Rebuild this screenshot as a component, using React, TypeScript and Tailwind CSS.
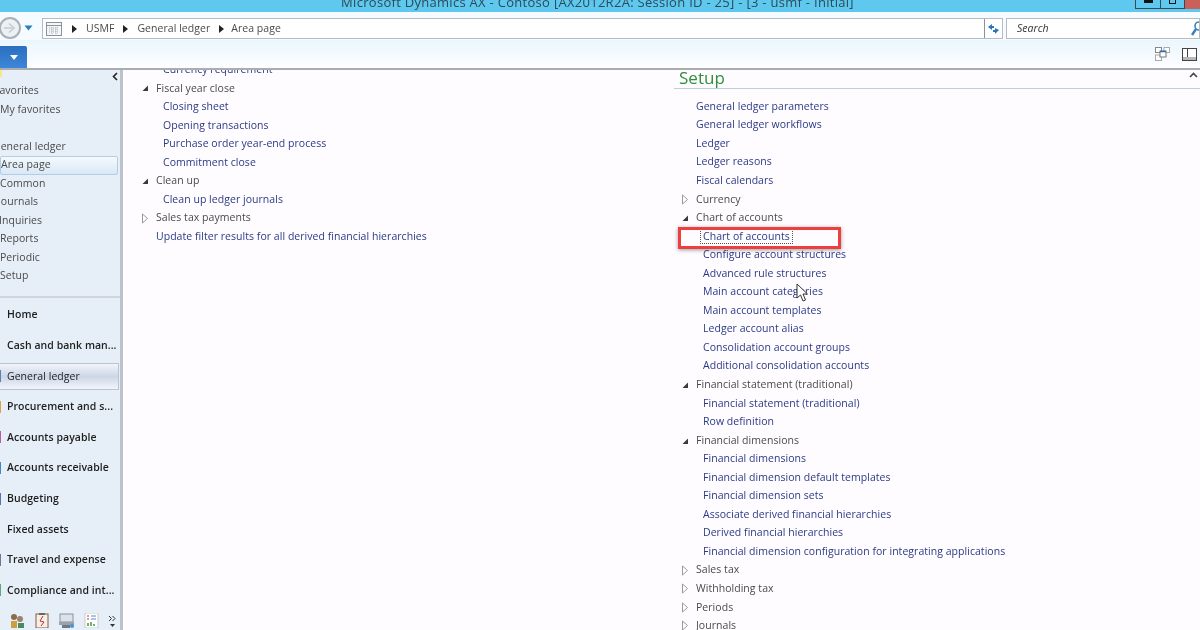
const F = "[font-family:'Open_Sans','Noto_Sans',sans-serif]";

type Row = { t: string; k: "link" | "sub" | "open" | "closed" | "plain" };

const leftRows: Row[] = [
  { t: "Fiscal year close", k: "open" },
  { t: "Closing sheet", k: "sub" },
  { t: "Opening transactions", k: "sub" },
  { t: "Purchase order year-end process", k: "sub" },
  { t: "Commitment close", k: "sub" },
  { t: "Clean up", k: "open" },
  { t: "Clean up ledger journals", k: "sub" },
  { t: "Sales tax payments", k: "closed" },
  { t: "Update filter results for all derived financial hierarchies", k: "link" },
];

const rightRows: Row[] = [
  { t: "General ledger parameters", k: "link" },
  { t: "General ledger workflows", k: "link" },
  { t: "Ledger", k: "link" },
  { t: "Ledger reasons", k: "link" },
  { t: "Fiscal calendars", k: "link" },
  { t: "Currency", k: "closed" },
  { t: "Chart of accounts", k: "open" },
  { t: "Chart of accounts", k: "sub" },
  { t: "Configure account structures", k: "sub" },
  { t: "Advanced rule structures", k: "sub" },
  { t: "Main account categories", k: "sub" },
  { t: "Main account templates", k: "sub" },
  { t: "Ledger account alias", k: "sub" },
  { t: "Consolidation account groups", k: "sub" },
  { t: "Additional consolidation accounts", k: "sub" },
  { t: "Financial statement (traditional)", k: "open" },
  { t: "Financial statement (traditional)", k: "sub" },
  { t: "Row definition", k: "sub" },
  { t: "Financial dimensions", k: "open" },
  { t: "Financial dimensions", k: "sub" },
  { t: "Financial dimension default templates", k: "sub" },
  { t: "Financial dimension sets", k: "sub" },
  { t: "Associate derived financial hierarchies", k: "sub" },
  { t: "Derived financial hierarchies", k: "sub" },
  { t: "Financial dimension configuration for integrating applications", k: "sub" },
  { t: "Sales tax", k: "closed" },
  { t: "Withholding tax", k: "closed" },
  { t: "Periods", k: "closed" },
  { t: "Journals", k: "closed" },
];

const smallNav = ["Favorites", "My favorites", "", "General ledger", "Area page", "Common", "Journals", "Inquiries", "Reports", "Periodic", "Setup"];
const bigNav = [
  { t: "Home", c: "" },
  { t: "Cash and bank man...", c: "" },
  { t: "General ledger", c: "#5a7fb0" },
  { t: "Procurement and s...", c: "#d9a441" },
  { t: "Accounts payable", c: "#c05aa0" },
  { t: "Accounts receivable", c: "#3f87c9" },
  { t: "Budgeting", c: "#5a6fb0" },
  { t: "Fixed assets", c: "" },
  { t: "Travel and expense", c: "#6a7890" },
  { t: "Compliance and int...", c: "#5fa87a" },
];

function Tri({ open }: { open: boolean }) {
  return open ? (
    <svg width="8" height="8" viewBox="0 0 8 8" className="shrink-0">
      <path d="M7 1.500V7H1.500z" fill="#3a3a3a" />
    </svg>
  ) : (
    <svg width="8" height="11" viewBox="0 0 8 11" className="shrink-0">
      <path d="M1.500 1l5 4.500-5 4.500z" fill="#fff" stroke="#9a9a9a" />
    </svg>
  );
}

function Crumb({ cls }: { cls: string }) {
  return (
    <svg width="5" height="8" viewBox="0 0 5 8" className={`shrink-0 ${cls}`}>
      <path d="M0 0l5 4-5 4z" fill="#222" />
    </svg>
  );
}

function TreeRow({ r, focus }: { r: Row; focus?: boolean }) {
  const color = r.k === "open" || r.k === "closed" ? "text-[#4a4a4a]" : "text-[#2b3a86]";
  return (
    <div className={`flex h-[18.55px] items-center whitespace-nowrap ${color}`}>
      <span className="flex w-[22px] shrink-0 items-center pl-[7px]">
        {r.k === "open" && <Tri open />}
        {r.k === "closed" && <Tri open={false} />}
      </span>
      <span className={r.k === "sub" ? "ml-[7px]" : ""}>
        <span className={focus ? "-mx-[3px] border border-dotted border-[#555] px-[2px]" : ""}>{r.t}</span>
      </span>
    </div>
  );
}

export default function App() {
  return (
    <div className={`flex h-[630px] w-[1200px] flex-col overflow-hidden bg-[#fefcff] text-[10.5px] tracking-[0.04px] blur-[0.35px] ${F}`}>
      {/* title bar */}
      <div className="relative flex h-[12px] shrink-0 items-end justify-center overflow-hidden bg-[#5fc8ee] pr-[5px] text-[13px] leading-[19px] tracking-[0.29px] text-[#2c4a5a]">
        <span className="whitespace-nowrap">Microsoft Dynamics AX - Contoso [AX2012R2A: Session ID - 25] - [3 - usmf - Initial]</span>
        <div className="absolute right-0 top-0 flex h-[9px] items-stretch">
          <div className="flex w-[26px] items-start justify-center border border-t-0 border-[#3a4a55] bg-[#5fc8ee]"><div className="h-[3px] w-[9px] bg-[#111]" /></div>
          <div className="flex w-[24px] items-start justify-center border border-l-0 border-t-0 border-[#3a4a55] bg-[#5fc8ee]"><div className="h-[4px] w-[7px] border border-t-0 border-[#111]" /></div>
          <div className="w-[15px] bg-[#c9605a]" />
        </div>
      </div>

      {/* address row */}
      <div className="flex h-[28px] shrink-0 items-start bg-[#f5fbfe] pt-[6px]">
        <div className="-mt-[1px] flex w-[42px] shrink-0 items-center">
          <div className="-ml-[1px] flex h-[22px] w-[22px] items-center justify-center rounded-full border-2 border-[#a8b0b8] bg-[#eef1f4]">
            <svg width="14" height="12" viewBox="0 0 14 12"><path d="M1 6h8M6 1.500L11 6l-5 4.500" fill="none" stroke="#c4cbd1" strokeWidth="1.600" /></svg>
          </div>
          <svg width="9" height="6" viewBox="0 0 9 6" className="ml-[3px]"><path d="M0.500 0.500h8L4.500 5.500z" fill="#2a7fc0" /></svg>
        </div>
        <div className="flex h-[21px] w-[961px] items-center border border-[#b4bcc4] bg-white text-[#4a4a4a]">
          <svg width="16" height="14" viewBox="0 0 16 14" className="ml-[3px] shrink-0"><rect x=".5" y=".5" width="15" height="13" fill="#f4f6f8" stroke="#8a929a" /><path d="M1 3.500h14" stroke="#8a929a" /><path d="M3 6h10M3 8h10M3 10h10M6 5v7M10 5v7" stroke="#a6aeb6" strokeDasharray="1 1" /></svg>
          <Crumb cls="ml-[10px] mr-[9px]" />
          <span>USMF</span>
          <Crumb cls="ml-[9px] mr-[9px]" />
          <span>General ledger</span>
          <Crumb cls="ml-[9px] mr-[7px]" />
          <span>Area page</span>
          <div className="ml-auto flex h-full w-[18px] items-center justify-center border-l border-[#8a929a]">
            <svg width="13" height="12" viewBox="0 0 13 12"><path d="M5 1L1 4l4 3V5h2V3H5zM8 11l4-4-4-2v2H6v2h2z" fill="#2a75c0" /></svg>
          </div>
        </div>
        <div className="ml-[3px] flex h-[21px] min-w-0 flex-1 items-center overflow-hidden border border-[#b4bcc4] bg-white pl-[10px] italic text-[#333]">
          <span>Search</span>
          <svg width="8" height="16" viewBox="0 0 8 16" className="ml-auto shrink-0"><circle cx="8" cy="5" r="4" fill="none" stroke="#3a80c0" strokeWidth="1.600" /><path d="M5 8l-4 6" stroke="#3a80c0" strokeWidth="2.400" /></svg>
        </div>
      </div>

      {/* tab row */}
      <div className="flex h-[28px] shrink-0 items-end justify-between bg-gradient-to-b from-[#eaf6fd] to-[#fdfeff] pt-[6px]">
        <div className="flex h-[22px] w-[27px] items-center justify-center rounded-tr-[2px] bg-gradient-to-b from-[#2a6fc0] to-[#3f86d8]">
          <svg width="8" height="5" viewBox="0 0 8 5"><path d="M0 0h8L4 5z" fill="#fff" /></svg>
        </div>
        <div className="mb-[7px] mr-[3px] flex items-center gap-[12px]">
          <svg width="15" height="14" viewBox="0 0 15 14"><rect x=".5" y=".5" width="6" height="5" fill="#fff" stroke="#888" /><rect x="9" y=".5" width="5.500" height="5" fill="#fff" stroke="#aaa" /><rect x=".5" y="8" width="6" height="5.500" fill="#fff" stroke="#aaa" /><rect x="5" y="4" width="6" height="6" fill="#fff" stroke="#777" /><path d="M5 4.500h6" stroke="#2a6fd0" strokeWidth="1.500" /></svg>
          <svg width="15" height="13" viewBox="0 0 15 13"><rect x=".5" y=".5" width="14" height="12" fill="#fff" stroke="#444" /><rect x="1" y="9" width="13" height="3" fill="#b8b8b8" /><path d="M5.500 1v8" stroke="#444" /></svg>
        </div>
      </div>
      <div className="h-[2px] shrink-0 bg-[#a9adb1]" />

      {/* body */}
      <div className="relative flex min-h-0 flex-1">
        {/* nav */}
        <div className="relative flex w-[120px] shrink-0 flex-col overflow-hidden bg-[#e6eff7] text-[#4a4a4a]">
          <div className="absolute right-[2px] top-[2px]">
            <svg width="6" height="9" viewBox="0 0 6 9"><path d="M5 1L1.500 4.500 5 8" fill="none" stroke="#222" strokeWidth="1.600" /></svg>
          </div>
          <div className="absolute left-0 top-0 h-[7px] w-[2px] bg-[#f5e88a]" />
          <div className="flex h-[226px] shrink-0 flex-col pt-[12px]">
            {smallNav.map((s, i) => (
              <div
                key={i}
                className={`flex h-[18.5px] shrink-0 items-center whitespace-nowrap ${i === 0 ? "-ml-[6px]" : i === 3 ? "-ml-[7px]" : i === 6 ? "-ml-[2px]" : i === 7 ? "-ml-[1px]" : ""} ${s === "Area page" ? "mr-[2px] rounded-[2px] border border-[#b4cde6] bg-gradient-to-b from-[#f4f9fd] to-[#d9e8f6]" : ""}`}
              >
                {s}
              </div>
            ))}
          </div>
          <div className="h-[2px] shrink-0 bg-[#d0d5da]" />
          <div className="flex flex-col pt-[2px] font-semibold text-[#1e1e1e]">
            {bigNav.map((b) => (
              <div key={b.t} className="relative flex h-[30.6px] shrink-0 items-center whitespace-nowrap">
                {b.t === "General ledger" ? (
                  <div className="mr-[1px] flex h-[27px] flex-1 items-center border-y border-r border-[#b8c4d4] bg-gradient-to-b from-[#f2f5fa] via-[#cdd6e7] to-[#f2f5fa] pl-[7px] font-medium">{b.t}</div>
                ) : (
                  <div className="pl-[7px]">{b.t}</div>
                )}
                {b.c && <span className="absolute left-0 top-[9px] h-[12px] w-[1px]" style={{ backgroundColor: b.c }} />}
              </div>
            ))}
          </div>
          <div className="mt-auto flex h-[19px] items-center gap-[9.500px] pl-[10px]">
            <svg width="15" height="15" viewBox="0 0 15 15"><circle cx="4" cy="4" r="3" fill="#8a6a50" /><circle cx="10" cy="6" r="3" fill="#a08068" /><rect x="1" y="8" width="6" height="7" fill="#c9a040" /><rect x="8" y="10" width="6" height="5" fill="#4a8a60" /></svg>
            <svg width="15" height="15" viewBox="0 0 15 15"><rect x="1" y="1" width="12" height="14" fill="#f4f0e8" stroke="#8a5a40" /><rect x="4" y="0" width="6" height="2" fill="#666" /><path d="M8 3L5 8l4 1-3 4" fill="none" stroke="#c03030" /></svg>
            <svg width="15" height="15" viewBox="0 0 15 15"><rect x="1" y="1" width="13" height="8" fill="#dde2ea" stroke="#8a929a" /><rect x="0" y="9" width="15" height="3" fill="#9aa2ac" /><rect x="3" y="12" width="8" height="3" fill="#6a7a8a" /><circle cx="13" cy="13" r="2" fill="#4a90d0" /></svg>
            <svg width="15" height="15" viewBox="0 0 15 15"><rect x="1" y="0" width="13" height="15" fill="#fff" stroke="#c8ccd0" /><path d="M3 3h2M3 6h2" stroke="#d03030" /><path d="M7 3h5M7 6h5" stroke="#5a8ad0" /><path d="M4 13v-3M7 13V9M10 13v-2" stroke="#50a050" strokeWidth="1.600" /></svg>
            <div className="flex flex-col items-center">
              <svg width="8" height="7" viewBox="0 0 8 7"><path d="M1 1l2.500 2.500L1 6M4.500 1L7 3.500 4.500 6" fill="none" stroke="#333" /></svg>
              <svg width="5" height="3" viewBox="0 0 5 3" className="mt-[2px]"><path d="M0 0h5L2.500 3z" fill="#333" /></svg>
            </div>
          </div>
        </div>
        <div className="w-[3px] shrink-0 bg-[#bcc2c8]" />

        {/* main */}
        <div className="relative flex min-w-0 flex-1">
          <div className="w-[551px] shrink-0 overflow-hidden">
            <div className="-mt-[9.4px] pl-[11px]">
              <TreeRow r={{ t: "Currency requirement", k: "sub" }} />
              {leftRows.map((r, i) => (
                <TreeRow key={i} r={r} />
              ))}
            </div>
          </div>
          <div className="flex min-w-0 flex-1 flex-col">
            <div className="flex h-[18.5px] shrink-0 items-end justify-between border-b border-[#bcd0dc] pr-[2px]">
              <span className="ml-[5px] text-[17px] leading-[20px] text-[#2f8f3c]">Setup</span>
              <span className="self-start pt-[2px]">
                <svg width="9" height="6" viewBox="0 0 9 6"><path d="M1 5l3.500-3.500L8 5" fill="none" stroke="#444" strokeWidth="1.600" /></svg>
              </span>
            </div>
            <div className="pt-[8.9px]">
              {rightRows.map((r, i) => (
                <TreeRow key={i} r={r} focus={i === 7} />
              ))}
            </div>
          </div>

          {/* annotation */}
          <div className="pointer-events-none absolute left-[555px] top-[157px] h-[22px] w-[163px] border-[3px] border-[#ee3f3f] shadow-[0_1px_4px_rgba(0,0,0,0.4)]" />
          <svg width="14" height="20" viewBox="0 0 14 20" className="pointer-events-none absolute left-[673px] top-[213px]">
            <path d="M1 1v14l3.500-3 2.500 6 2.500-1-2.500-6h4.500z" fill="#fff" stroke="#333" />
          </svg>
        </div>
      </div>
    </div>
  );
}
